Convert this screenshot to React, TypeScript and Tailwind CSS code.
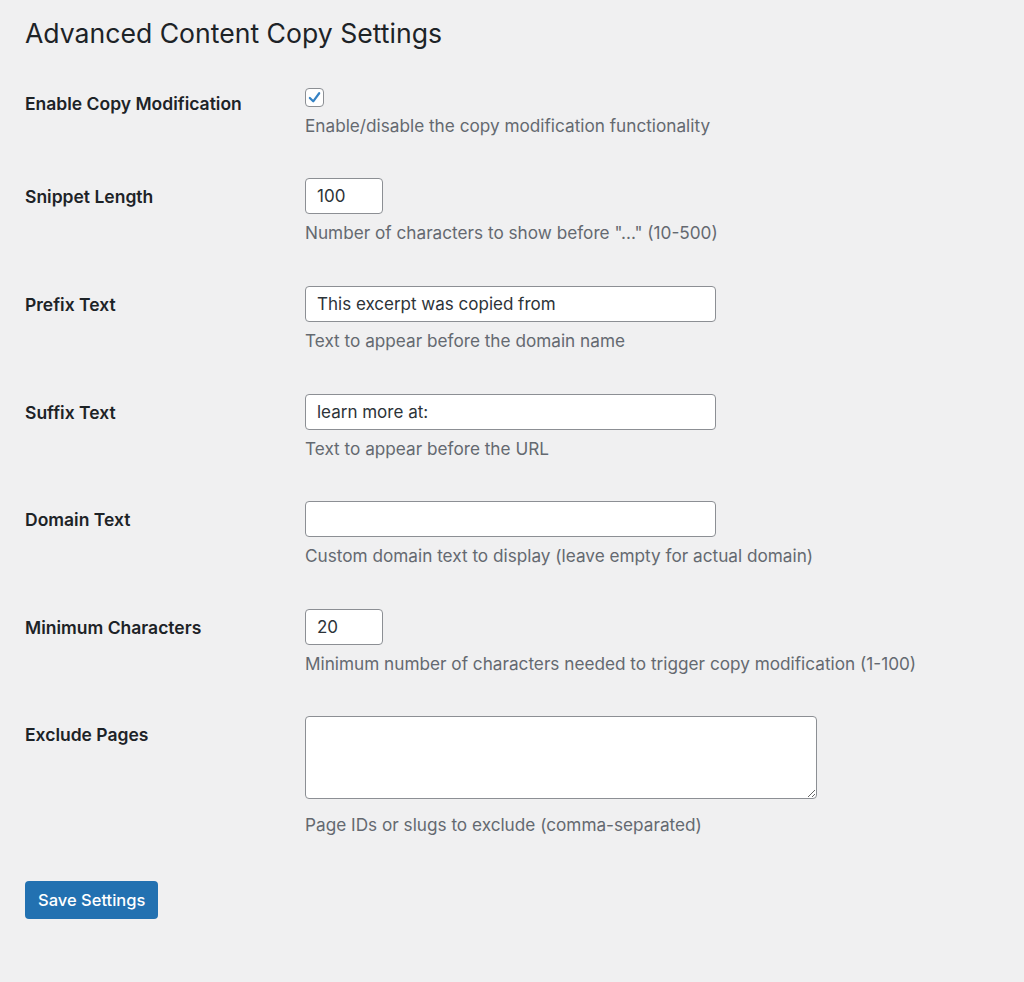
import React from 'react'

const font = { fontFamily: 'Inter, "Noto Sans", sans-serif' }

interface Row {
  label: string
  kind: 'checkbox' | 'number' | 'text' | 'textarea'
  value?: string
  help: string
}

const rows: Row[] = [
  { label: 'Enable Copy Modification', kind: 'checkbox', help: 'Enable/disable the copy modification functionality' },
  { label: 'Snippet Length', kind: 'number', value: '100', help: 'Number of characters to show before "..." (10-500)' },
  { label: 'Prefix Text', kind: 'text', value: 'This excerpt was copied from', help: 'Text to appear before the domain name' },
  { label: 'Suffix Text', kind: 'text', value: 'learn more at:', help: 'Text to appear before the URL' },
  { label: 'Domain Text', kind: 'text', value: '', help: 'Custom domain text to display (leave empty for actual domain)' },
  { label: 'Minimum Characters', kind: 'number', value: '20', help: 'Minimum number of characters needed to trigger copy modification (1-100)' },
  { label: 'Exclude Pages', kind: 'textarea', help: 'Page IDs or slugs to exclude (comma-separated)' },
]

const Field = ({ row }: { row: Row }) => {
  if (row.kind === 'checkbox') {
    return (
      <span className="flex h-[19px] w-[19px] items-center justify-center rounded-[4px] border border-[#8c8f94] bg-white">
        <svg viewBox="0 0 20 20" className="h-[17px] w-[17px]">
          <path d="M4.5 10.5 L8.5 14.5 L15.5 5" fill="none" stroke="#3582c4" strokeWidth="2.6" strokeLinecap="round" strokeLinejoin="round" />
        </svg>
      </span>
    )
  }
  if (row.kind === 'textarea') {
    return (
      <textarea
        readOnly
        className="block h-[83px] w-[512px] rounded-[4px] border border-[#8c8f94] bg-white px-3 py-2 text-[17px] text-[#2c3338] outline-none"
      />
    )
  }
  return (
    <input
      readOnly
      type="text"
      defaultValue={row.value}
      className={`block h-[36px] rounded-[4px] border border-[#8c8f94] bg-white px-[11px] text-[17px] text-[#2c3338] outline-none ${
        row.kind === 'number' ? 'w-[78px]' : 'w-[411px]'
      }`}
      style={font}
    />
  )
}

export default function App() {
  return (
    <div className="min-h-[982px] bg-[#f0f0f1] px-[25px] pt-[14px] text-[#1d2327]" style={font}>
      <h1 className="text-[26.6px] font-normal leading-[38px] text-[#1d2327]">Advanced Content Copy Settings</h1>

      <div className="mt-[15px]">
        {rows.map((row) => (
          <div key={row.label} className="flex py-[20.8px]">
            <div
              className={`w-[280px] shrink-0 text-[17.5px] font-semibold leading-[22px] text-[#1d2327] ${
                row.kind === 'checkbox' ? 'pt-[5px]' : 'pt-[8px]'
              }`}
            >
              {row.label}
            </div>
            <div>
              <Field row={row} />
              <p
                className={`text-[17.2px] leading-[22px] text-[#646970] ${
                  row.kind === 'textarea' ? 'mt-[15px]' : 'mt-[8px]'
                }`}
              >
                {row.help}
              </p>
            </div>
          </div>
        ))}
      </div>

      <button className="mt-[24px] h-[38px] rounded-[4px] bg-[#2271b1] px-[13px] text-[16.5px] font-medium text-white">
        Save Settings
      </button>
    </div>
  )
}
